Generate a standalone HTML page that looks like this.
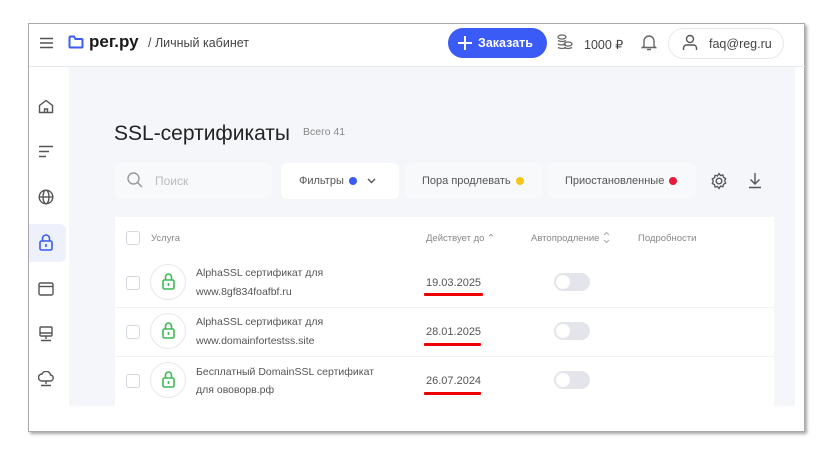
<!DOCTYPE html>
<html><head><meta charset="utf-8"><style>
*{box-sizing:border-box;margin:0;padding:0}
body{width:828px;height:461px;background:#fff;font-family:"Liberation Sans",sans-serif;position:relative;overflow:hidden;color:#222}
.a{position:absolute}
.win{left:28px;top:23px;width:777px;height:409px;background:#fff;border:1px solid #aaa;box-shadow:2px 2px 3px rgba(0,0,0,.35)}
.t{font-size:11px;color:#555;white-space:nowrap}
.g{color:#888}
.btn{background:#f8f9fb;border-radius:6px}
.cb{width:14px;height:14px;border:1px solid #d4d7dd;border-radius:3px;background:#fff}
.lock{width:36px;height:36px;border:1px solid #e6e8ec;border-radius:50%;background:#fff}
.tog{width:36px;height:18px;border-radius:9px;background:#e3e5ea}
.tog:after{content:"";position:absolute;left:2px;top:2px;width:14px;height:14px;border-radius:50%;background:#fff}
.red{height:3px;background:#e00;border-radius:1px}
svg{position:absolute}
</style></head><body>
<div class="a win"></div>
<div class="a" style="left:69px;top:67px;width:726px;height:339px;background:#f4f6fa"></div>
<div class="a" style="left:29px;top:66px;width:776px;height:1px;background:#e6e8ee"></div>
<svg style="left:40px;top:37px" width="13" height="12"><path d="M0 1.5H13M0 6H13M0 10.5H13" stroke="#555" stroke-width="1.5"/></svg>
<svg style="left:68px;top:35px" width="16" height="14"><path d="M1.5 2.5V11.5a1 1 0 0 0 1 1H13.5a1 1 0 0 0 1-1V5a1 1 0 0 0-1-1H7.5L6 1.5H2.5a1 1 0 0 0-1 1z" fill="none" stroke="#3a5bf5" stroke-width="2"/></svg>
<div class="a" style="left:89px;top:32px;font-size:17px;font-weight:bold;color:#1a1a1a">рег.ру</div>
<div class="a t" style="left:148px;top:36px;font-size:12.5px;color:#444">/ Личный кабинет</div>
<div class="a" style="left:448px;top:28px;width:99px;height:30px;border-radius:15px;background:#3a5bf5;color:#fff;font-size:12.5px;font-weight:bold;line-height:30px;padding-left:30px">Заказать</div>
<svg style="left:458px;top:36px" width="14" height="14"><path d="M7 0V14M0 7H14" stroke="#fff" stroke-width="2"/></svg>
<svg style="left:557px;top:34px" width="16" height="17"><g fill="none" stroke="#666" stroke-width="1.3"><ellipse cx="5" cy="3" rx="4" ry="2"/><path d="M1 6.5q4 2 8 0M1 10q4 2 8 0M1 13.5q4 2 8 0"/><ellipse cx="11" cy="10" rx="4" ry="2"/><path d="M7 13.5q4 2 8 0"/></g></svg>
<div class="a t" style="left:584px;top:37px;font-size:12.5px;color:#444">1000 ₽</div>
<svg style="left:641px;top:34px" width="16" height="17"><path d="M3 12V7a5 5 0 0 1 10 0V12L14.5 13.5H1.5z M6 15.5h4" fill="none" stroke="#666" stroke-width="1.4"/></svg>
<div class="a" style="left:668px;top:28px;width:116px;height:31px;border:1px solid #e6e8ec;border-radius:16px"></div>
<svg style="left:682px;top:34px" width="16" height="17"><circle cx="8" cy="5" r="3.5" fill="none" stroke="#555" stroke-width="1.4"/><path d="M1.5 16v-2a3 3 0 0 1 3-3h7a3 3 0 0 1 3 3v2" fill="none" stroke="#555" stroke-width="1.4"/></svg>
<div class="a t" style="left:709px;top:37px;font-size:12.5px;color:#444">faq@reg.ru</div>
<svg style="left:38px;top:99px" width="16" height="15"><path d="M1.5 6.5L8 1.5L14.5 6.5V13.5H1.5z M6.5 13.5V10h3v3.5" fill="none" stroke="#555" stroke-width="1.4"/></svg>
<svg style="left:39px;top:145px" width="14" height="13"><path d="M0 1.5H14M0 6.5H10M0 11.5H7" stroke="#555" stroke-width="1.5"/></svg>
<svg style="left:38px;top:189px" width="16" height="16"><g fill="none" stroke="#555" stroke-width="1.4"><circle cx="8" cy="8" r="6.8"/><ellipse cx="8" cy="8" rx="3" ry="6.8"/><path d="M1.2 8H14.8"/></g></svg>
<div class="a" style="left:29px;top:224px;width:37px;height:38px;background:#eef1fb;border-radius:0 6px 6px 0"></div>
<svg style="left:39px;top:234px" width="14" height="17"><path d="M3.5 7V4.5a3.5 3.5 0 0 1 7 0V7" fill="none" stroke="#3a5bf5" stroke-width="1.6"/><rect x="1" y="7" width="12" height="9" rx="1.5" fill="none" stroke="#3a5bf5" stroke-width="1.6"/><path d="M7 10v3" stroke="#3a5bf5" stroke-width="1.6"/></svg>
<svg style="left:38px;top:282px" width="16" height="14"><rect x="1" y="1" width="14" height="12" rx="1.5" fill="none" stroke="#555" stroke-width="1.4"/><path d="M1 4.5H15" stroke="#555" stroke-width="1.4"/></svg>
<svg style="left:38px;top:326px" width="16" height="16"><rect x="2" y="1" width="12" height="9" rx="1" fill="none" stroke="#555" stroke-width="1.4"/><path d="M2 7H14M8 10v3M3 14.5H13" stroke="#555" stroke-width="1.4"/></svg>
<svg style="left:38px;top:371px" width="16" height="16"><path d="M4 10a3.5 3.5 0 0 1 0-7a4.5 4.5 0 0 1 8.5 1a3 3 0 0 1-0.5 6z M8 10v3M3 14.5H13" fill="none" stroke="#555" stroke-width="1.4"/></svg>
<div class="a" style="left:114px;top:122px;font-size:21px;color:#222">SSL-сертификаты</div>
<div class="a t g" style="left:303px;top:126px;font-size:10.5px">Всего 41</div>
<div class="a btn" style="left:115px;top:163px;width:157px;height:36px"></div>
<svg style="left:127px;top:172px" width="16" height="16"><circle cx="6.5" cy="6.5" r="5.5" fill="none" stroke="#999" stroke-width="1.4"/><path d="M10.5 10.5L15 15" stroke="#999" stroke-width="1.5"/></svg>
<div class="a t" style="left:155px;top:174px;font-size:12px;color:#bbb">Поиск</div>
<div class="a" style="left:281px;top:163px;width:118px;height:36px;background:#fff;border-radius:6px"></div>
<div class="a t" style="left:299px;top:175px">Фильтры</div>
<div class="a" style="left:349px;top:177px;width:8px;height:8px;border-radius:50%;background:#3a5bf5"></div>
<svg style="left:367px;top:178px" width="9" height="6"><path d="M1 1l3.5 3.5L8 1" fill="none" stroke="#555" stroke-width="1.4"/></svg>
<div class="a btn" style="left:405px;top:163px;width:138px;height:36px"></div>
<div class="a t" style="left:422px;top:175px">Пора продлевать</div>
<div class="a" style="left:516px;top:177px;width:8px;height:8px;border-radius:50%;background:#f5c518"></div>
<div class="a btn" style="left:548px;top:163px;width:148px;height:36px"></div>
<div class="a t" style="left:565px;top:175px">Приостановленные</div>
<div class="a" style="left:669px;top:177px;width:8px;height:8px;border-radius:50%;background:#e8193c"></div>
<svg style="left:710px;top:172px" width="18" height="18"><circle cx="9" cy="9" r="2.8" fill="none" stroke="#555" stroke-width="1.4"/><path d="M9 1.5l1.5 2 2.4-.6.6 2.4 2.2 1.2-1 2.3 1 2.3-2.2 1.2-.6 2.4-2.4-.6L9 16.5l-1.5-2-2.4.6-.6-2.4L2.3 11.5l1-2.3-1-2.3 2.2-1.2.6-2.4 2.4.6z" fill="none" stroke="#555" stroke-width="1.3"/></svg>
<svg style="left:748px;top:172px" width="14" height="17"><path d="M7 1V12M2.5 7.5L7 12l4.5-4.5M1 15.5H13" fill="none" stroke="#555" stroke-width="1.4"/></svg>
<div class="a" style="left:115px;top:217px;width:659px;height:189px;background:#fff"></div>
<div class="a" style="left:115px;top:307px;width:659px;height:1px;background:#f0f1f4"></div>
<div class="a" style="left:115px;top:356px;width:659px;height:1px;background:#f0f1f4"></div>
<div class="a cb" style="left:126px;top:231px"></div>
<div class="a t g" style="left:151px;top:233px;font-size:9.5px">Услуга</div>
<div class="a t g" style="left:426px;top:233px;font-size:9.5px">Действует до ⌃</div>
<div class="a t g" style="left:531px;top:233px;font-size:9.5px">Автопродление</div>
<svg style="left:603px;top:231px" width="7" height="13"><path d="M1 4l2.5-2.5L6 4M1 9l2.5 2.5L6 9" fill="none" stroke="#aaa" stroke-width="1"/></svg>
<div class="a t g" style="left:638px;top:233px;font-size:9.5px">Подробности</div>
<div class="a cb" style="left:126px;top:276px"></div>
<div class="a lock" style="left:150px;top:264px"></div>
<div class="a t" style="left:196px;top:267px;font-size:10.5px">AlphaSSL сертификат для</div>
<div class="a t" style="left:196px;top:286px;font-size:10.5px">www.8gf834foafbf.ru</div>
<div class="a t" style="left:426px;top:277px;font-size:11px">19.03.2025</div>
<div class="a red" style="left:424px;top:293px;width:59px"></div>
<div class="a tog" style="left:554px;top:273px"></div>
<div class="a cb" style="left:126px;top:325px"></div>
<div class="a lock" style="left:150px;top:313px"></div>
<div class="a t" style="left:196px;top:316px;font-size:10.5px">AlphaSSL сертификат для</div>
<div class="a t" style="left:196px;top:335px;font-size:10.5px">www.domainfortestss.site</div>
<div class="a t" style="left:426px;top:326px;font-size:11px">28.01.2025</div>
<div class="a red" style="left:424px;top:343px;width:57px"></div>
<div class="a tog" style="left:554px;top:322px"></div>
<div class="a cb" style="left:126px;top:374px"></div>
<div class="a lock" style="left:150px;top:362px"></div>
<div class="a t" style="left:196px;top:366px;font-size:10.5px">Бесплатный DomainSSL сертификат</div>
<div class="a t" style="left:196px;top:384px;font-size:10.5px">для ововорв.рф</div>
<div class="a t" style="left:426px;top:375px;font-size:11px">26.07.2024</div>
<div class="a red" style="left:424px;top:392px;width:57px"></div>
<div class="a tog" style="left:554px;top:371px"></div>
<svg style="left:162px;top:272px" width="13" height="18"><path d="M3.5 8V5a3 3 0 0 1 6 0V8" fill="none" stroke="#3cba54" stroke-width="1.6"/><rect x="1" y="8" width="11" height="9" rx="1.5" fill="none" stroke="#3cba54" stroke-width="1.6"/><path d="M6.5 11v3" stroke="#3cba54" stroke-width="1.6"/></svg>
<svg style="left:162px;top:321px" width="13" height="18"><path d="M3.5 8V5a3 3 0 0 1 6 0V8" fill="none" stroke="#3cba54" stroke-width="1.6"/><rect x="1" y="8" width="11" height="9" rx="1.5" fill="none" stroke="#3cba54" stroke-width="1.6"/><path d="M6.5 11v3" stroke="#3cba54" stroke-width="1.6"/></svg>
<svg style="left:162px;top:370px" width="13" height="18"><path d="M3.5 8V5a3 3 0 0 1 6 0V8" fill="none" stroke="#3cba54" stroke-width="1.6"/><rect x="1" y="8" width="11" height="9" rx="1.5" fill="none" stroke="#3cba54" stroke-width="1.6"/><path d="M6.5 11v3" stroke="#3cba54" stroke-width="1.6"/></svg>
</body></html>
